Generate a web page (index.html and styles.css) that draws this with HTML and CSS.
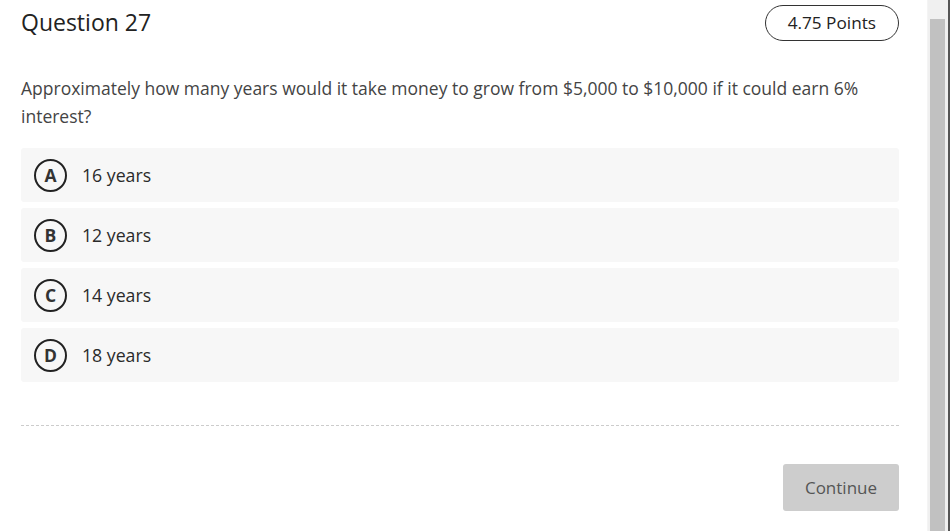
FILE: index.html
```html
<!DOCTYPE html>
<html lang="en">
  <head>
    <meta charset="UTF-8" />
    <meta name="viewport" content="width=device-width, initial-scale=1.0" />
    <title>Question 27</title>
    <link rel="stylesheet" href="styles.css">
  </head>
  <body>
    <div class="frame">
      <div class="quiz">
        <div class="quiz-header">
          <h1 class="quiz-title">Question 27</h1>
          <span class="points">4.75 Points</span>
        </div>

        <p class="question">
          Approximately how many years would it take money to grow from $5,000 to $10,000 if it could earn 6% interest?
        </p>

        <div class="options">
          <label class="option">
            <span class="letter">A</span>
            <span class="option-text">16 years</span>
          </label>
          <label class="option">
            <span class="letter">B</span>
            <span class="option-text">12 years</span>
          </label>
          <label class="option">
            <span class="letter">C</span>
            <span class="option-text">14 years</span>
          </label>
          <label class="option">
            <span class="letter">D</span>
            <span class="option-text">18 years</span>
          </label>
        </div>

        <hr class="divider" />

        <div class="button-row">
          <button class="continue-btn" disabled>Continue</button>
        </div>
      </div>
      <!-- fake scrollbar from the screenshot -->
      <div class="scrollbar">
        <div class="scroll-thumb"></div>
      </div>
    </div>
  </body>
</html>
```

FILE: styles.css
```css
* {
  margin: 0;
  padding: 0;
  box-sizing: border-box;
}
html, body {
  height: 100%;
  overflow: hidden;
}
body {
  font-family: "Open Sans", "Noto Sans", sans-serif;
  color: #333;
  background: #fff;
}
.frame {
  display: flex;
  height: 100%;
}
.quiz {
  flex: 1;
  padding: 5px 28px 0 21px;
}
.quiz-header {
  display: flex;
  justify-content: space-between;
  align-items: center;
  height: 36px;
}
.quiz-title {
  font-size: 23px;
  font-weight: 400;
  color: #222;
  margin-top: -2px;
}
.points {
  display: inline-block;
  border: 1px solid #333;
  border-radius: 18px;
  height: 36px;
  line-height: 34px;
  padding: 0 22px;
  font-size: 17.2px;
  color: #222;
}
.question {
  margin-top: 33px;
  font-size: 17.5px;
  line-height: 28px;
  color: #444;
  padding-right: 30px;
}
.options {
  display: flex;
  flex-direction: column;
  gap: 6px;
  margin-top: 18px;
}
.option {
  display: flex;
  align-items: center;
  height: 54px;
  background: #f7f7f7;
  border-radius: 3px;
  padding-left: 13px;
  cursor: pointer;
}
.letter {
  display: flex;
  justify-content: center;
  align-items: center;
  flex-shrink: 0;
  width: 33px;
  height: 33px;
  border: 2px solid #222;
  border-radius: 50%;
  font-size: 17.5px;
  font-weight: 700;
  color: #333;
}
.option-text {
  margin-left: 15px;
  font-size: 17.7px;
  color: #2a2a2a;
}
.divider {
  border: none;
  border-top: 1px dashed #ccc;
  margin-top: 43px;
}
.button-row {
  display: flex;
  justify-content: flex-end;
  margin-top: 38px;
}
.continue-btn {
  width: 116px;
  height: 47px;
  border: none;
  border-radius: 3px;
  background: #cdcdcd;
  color: #555;
  font-family: inherit;
  font-size: 17px;
}
.scrollbar {
  width: 23px;
  border-left: 1px solid #f4f4f4;
  background: #f0f0f0;
  padding: 19px 3px 0 2px;
  border-right: 2px solid #555;
}
.scroll-thumb {
  height: 100%;
  background: #c1c1c1;
}
```
